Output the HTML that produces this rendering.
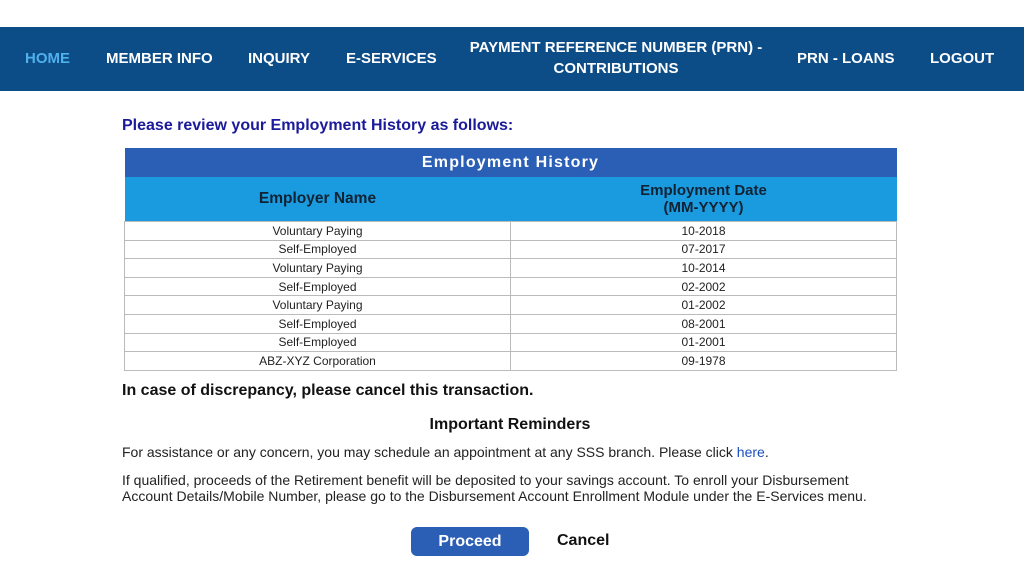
<!DOCTYPE html>
<html><head><style>
body{margin:0;width:1024px;height:576px;background:#fff;font-family:"Liberation Sans",sans-serif;position:relative;overflow:hidden}
.nav{position:absolute;left:0;top:27px;width:1024px;height:64px;background:#0c4d88}
.nav span{position:absolute;color:#fff;font-weight:bold;font-size:15px;text-align:center;line-height:21px}
.a{position:absolute}
table{position:absolute;left:124px;top:148px;width:773px;border-collapse:collapse}
td{border:1px solid #bbb;font-size:12px;text-align:center;height:17.6px;padding:0;color:#222}
</style></head><body>
<div class="nav">
<span style="left:25px;top:21px;color:#4fb0ec">HOME</span>
<span style="left:106px;top:21px">MEMBER INFO</span>
<span style="left:248px;top:21px">INQUIRY</span>
<span style="left:346px;top:21px">E-SERVICES</span>
<span style="left:466px;top:10px;width:300px">PAYMENT REFERENCE NUMBER (PRN) -<br>CONTRIBUTIONS</span>
<span style="left:797px;top:21px">PRN - LOANS</span>
<span style="left:930px;top:21px">LOGOUT</span>
</div>
<div class="a" style="left:122px;top:117px;color:#1a1a9a;font-weight:bold;font-size:16px">Please review your Employment History as follows:</div>
<table>
<tr><td colspan="2" style="background:#2a5fb5;color:#fff;font-weight:bold;font-size:16px;height:29px;border:none;letter-spacing:1.2px">Employment History</td></tr>
<tr><td style="background:#1a9be0;color:#123;font-weight:bold;font-size:15.5px;height:44px;border:none;width:386px">Employer Name</td><td style="background:#1a9be0;color:#123;font-weight:bold;font-size:15px;height:44px;border:none;line-height:17px">Employment Date<br>(MM-YYYY)</td></tr>
<tr><td>Voluntary Paying</td><td>10-2018</td></tr>
<tr><td>Self-Employed</td><td>07-2017</td></tr>
<tr><td>Voluntary Paying</td><td>10-2014</td></tr>
<tr><td>Self-Employed</td><td>02-2002</td></tr>
<tr><td>Voluntary Paying</td><td>01-2002</td></tr>
<tr><td>Self-Employed</td><td>08-2001</td></tr>
<tr><td>Self-Employed</td><td>01-2001</td></tr>
<tr><td>ABZ-XYZ Corporation</td><td>09-1978</td></tr>
</table>
<div class="a" style="left:122px;top:382px;font-weight:bold;font-size:16px;color:#111">In case of discrepancy, please cancel this transaction.</div>
<div class="a" style="left:0;width:1020px;text-align:center;top:416px;font-weight:bold;font-size:16px;color:#111">Important Reminders</div>
<div class="a" style="left:122px;top:444px;font-size:14px;color:#222">For assistance or any concern, you may schedule an appointment at any SSS branch. Please click <span style="color:#1a4fc0">here</span>.</div>
<div class="a" style="left:122px;top:472px;font-size:14px;color:#222;line-height:16px;width:760px">If qualified, proceeds of the Retirement benefit will be deposited to your savings account. To enroll your Disbursement Account Details/Mobile Number, please go to the Disbursement Account Enrollment Module under the E-Services menu.</div>
<div class="a" style="left:411px;top:527px;width:118px;height:29px;background:#2a5fb5;border-radius:6px;color:#fff;font-weight:bold;font-size:16px;text-align:center;line-height:29px">Proceed</div>
<div class="a" style="left:557px;top:532px;font-weight:bold;font-size:16px;color:#111">Cancel</div>
</body></html>
